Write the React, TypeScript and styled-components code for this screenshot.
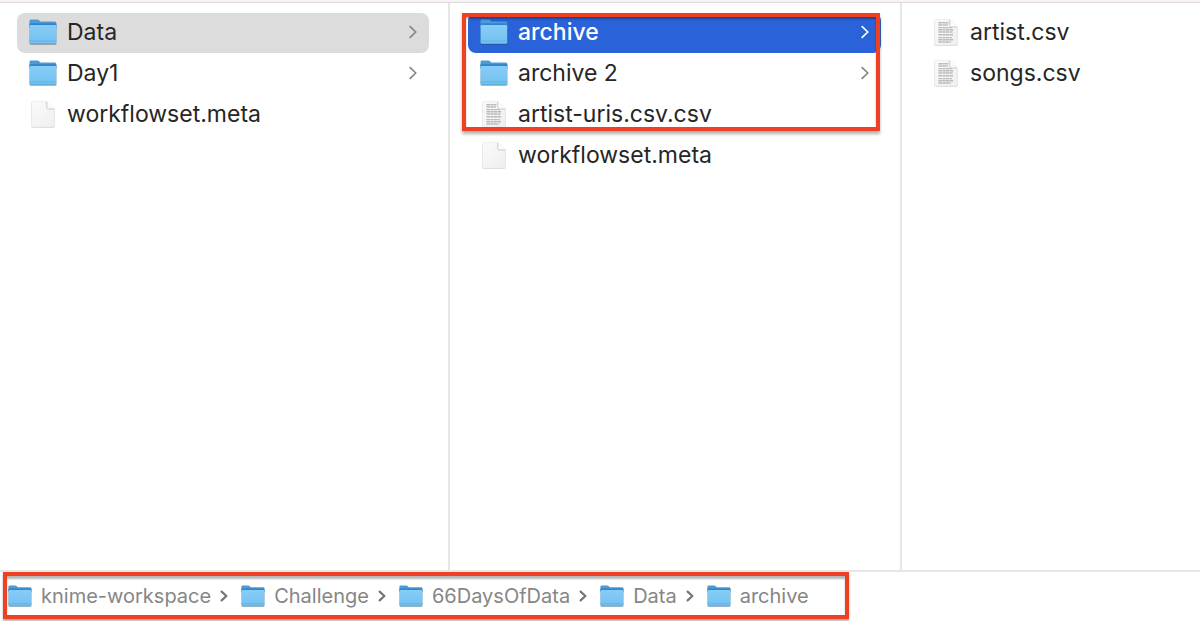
import React from "react";
import styled, { createGlobalStyle, css } from "styled-components";

const GlobalStyle = createGlobalStyle`
  *, *::before, *::after { box-sizing: border-box; }
  body {
    margin: 0;
    background: #ffffff;
    color: #262626;
    font-family: Inter, "Liberation Sans", sans-serif;
  }
`;

const Window = styled.main`
  display: flex;
  flex-direction: column;
  min-height: 100vh;
`;

const TopEdge = styled.div`
  height: 3px;
  background: #f8f2f4;
  border-bottom: 1px solid #dcd8da;
`;

const Browser = styled.div`
  flex: 1;
  display: grid;
  grid-template-columns: 450fr 452fr 298fr;
`;

const Column = styled.section`
  position: relative;
  padding: 10px 19px 10px 18px;
  border-right: 2px solid #e6e6e6;

  &:first-child {
    padding-left: 17px;
  }

  &:last-child {
    border-right: 0;
  }
`;

const List = styled.ul`
  display: flex;
  flex-direction: column;
  gap: 1px;
  margin: 0;
  padding: 0;
  list-style: none;
`;

type Tone = "plain" | "muted" | "active";

const Entry = styled.button<{ $tone: Tone }>`
  display: flex;
  align-items: center;
  gap: 10px;
  width: 100%;
  height: 40px;
  padding: 0 12px 2px;
  border: 0;
  border-radius: 8px;
  background: transparent;
  color: inherit;
  font-family: inherit;
  font-size: 23px;
  line-height: 28px;
  text-align: left;

  ${({ $tone }) => $tone === "muted" && css`background: #dcdcdc;`}
  ${({ $tone }) => $tone === "active" && css`
    background: #2962d9;
    color: #ffffff;
    font-weight: 500;
  `}
`;

const EntryName = styled.span`
  flex: 1;
  white-space: nowrap;
`;

const ListChevron = styled.svg<{ $tone: Tone }>`
  width: 8px;
  height: 14px;
  color: ${({ $tone }) => ($tone === "active" ? "#ffffff" : "#858585")};
`;

const Highlight = styled.div`
  position: absolute;
  top: 10px;
  left: 12px;
  right: 20px;
  height: 118px;
  border: 4px solid #ee4023;
  box-shadow: 0 3px 3px rgba(0, 0, 0, 0.3), inset 0 2px 2px rgba(0, 0, 0, 0.3);
  pointer-events: none;
`;

const Footer = styled.footer`
  display: flex;
  padding: 0 3px 2px;
  border-top: 2px solid #e6e6e6;
`;

const PathBar = styled.nav`
  padding: 0 36px 0 1px;
  border: 4px solid #ee4023;
  box-shadow: 0 2px 2px rgba(0, 0, 0, 0.35), inset 0 3px 2px rgba(0, 0, 0, 0.28);
`;

const PathList = styled.ol`
  display: flex;
  align-items: center;
  height: 39px;
  margin: 0;
  padding: 0;
  list-style: none;
`;

const PathItem = styled.li`
  display: flex;
  align-items: center;
`;

const PathLink = styled.a`
  display: flex;
  align-items: center;
  gap: 9px;
  color: #868686;
  font-size: 20px;
  line-height: 24px;
  text-decoration: none;
  white-space: nowrap;
`;

const PathChevron = styled.svg`
  width: 8px;
  height: 12px;
  margin: 0 13px 0 9px;
  color: #757575;
`;

const IconBox = styled.svg<{ $width: number; $height: number }>`
  flex: none;
  width: ${({ $width }) => $width}px;
  height: ${({ $height }) => $height}px;
  overflow: visible;
`;

function Folder({ small = false }: { small?: boolean }) {
  return (
    <IconBox $width={small ? 24 : 28} $height={small ? 22 : 26} viewBox="0 0 28 26" preserveAspectRatio="none" aria-hidden="true">
      <rect x="0.4" y="5" width="27.2" height="21" rx="1.6" fill="#000000" opacity="0.25" />
      <path d="M.5 2Q.5.6 1.9.6H8.4Q9.5.6 10.3 1.5L11.4 2.6H25.8Q27.3 2.6 27.3 4.2V9H.5Z" fill="#4b9bd6" />
      <path d="M.5 4.2H27.3V8H.5Z" fill="#3383ca" />
      <path d="M.5 7.4Q.5 6 2 6H25.8Q27.3 6 27.3 7.4V23.4Q27.3 25 25.7 25H2.1Q.5 25 .5 23.4Z" fill="url(#folder-front)" />
      <path d="M.5 22H27.3" stroke="#62b1e3" strokeWidth="0.9" />
      <path d="M1.2 24.7H26.6" stroke="#579fce" strokeWidth="0.8" />
    </IconBox>
  );
}

const textLines = [
  "M4.4 3.8H14.4", "M4.4 6H13.8", "M4.4 8.6H18", "M4.4 10.8H19.2", "M4.4 13H18.6",
  "M4.4 15.8H19", "M4.4 18.6H17.8", "M4.4 20.8H19", "M4.4 23H16.8",
];

const DocumentSlot = styled.span`
  display: flex;
  flex: none;
  justify-content: center;
  width: 28px;
`;

function Document({ text = false }: { text?: boolean }) {
  return (
    <DocumentSlot>
      <IconBox $width={24} $height={27} viewBox="0 0 24 27" aria-hidden="true">
        <path d="M2 1.2H16L23.6 8V25.2Q23.6 27 21.8 27H2.2Q.4 27 .4 25.2V2.8Q.4 1.2 2 1.2Z" fill="#000000" opacity="0.16" />
        <path d="M2 .4H15.8L23.4 8V24.6Q23.4 26.2 21.8 26.2H2.2Q.6 26.2.6 24.6V2Q.6.4 2 .4Z" fill="url(#paper)" stroke="#e4e4e4" strokeWidth="0.6" />
        {text && textLines.map((d) => (
          <path key={d} d={d} stroke="#bababa" strokeWidth="1.4" strokeDasharray="4 .4 2.6 .3 3.4 .4" />
        ))}
        <path d="M15.8.4 23.4 8H17.4Q15.8 8 15.8 6.4Z" fill="#fbfbfb" />
        <path d="M15.8.6V6.4Q15.8 8 17.4 8H23" fill="none" stroke="#c4c4c4" strokeWidth="0.9" />
      </IconBox>
    </DocumentSlot>
  );
}

function IconGradients() {
  return (
    <svg width="0" height="0" aria-hidden="true" display="block">
      <defs>
        <linearGradient id="folder-front" x1="0" y1="0" x2="0" y2="1">
          <stop offset="0" stopColor="#86cdf7" />
          <stop offset="1" stopColor="#72c0f0" />
        </linearGradient>
        <linearGradient id="paper" x1="0" y1="0" x2="1" y2="1">
          <stop offset="0" stopColor="#fafafa" />
          <stop offset="1" stopColor="#efefef" />
        </linearGradient>
      </defs>
    </svg>
  );
}

type Item = { name: string; kind: "folder" | "file" | "text"; tone?: Tone };

const columns: { label: string; items: Item[]; highlighted?: boolean }[] = [
  {
    label: "66DaysOfData",
    items: [
      { name: "Data", kind: "folder", tone: "muted" },
      { name: "Day1", kind: "folder" },
      { name: "workflowset.meta", kind: "file" },
    ],
  },
  {
    label: "Data",
    highlighted: true,
    items: [
      { name: "archive", kind: "folder", tone: "active" },
      { name: "archive 2", kind: "folder" },
      { name: "artist-uris.csv.csv", kind: "text" },
      { name: "workflowset.meta", kind: "file" },
    ],
  },
  {
    label: "archive",
    items: [
      { name: "artist.csv", kind: "text" },
      { name: "songs.csv", kind: "text" },
    ],
  },
];

const path = ["knime-workspace", "Challenge", "66DaysOfData", "Data", "archive"];

function FileEntry({ name, kind, tone = "plain" }: Item) {
  return (
    <li>
      <Entry type="button" $tone={tone}>
        {kind === "folder" ? <Folder /> : <Document text={kind === "text"} />}
        <EntryName>{name}</EntryName>
        {kind === "folder" && (
          <ListChevron $tone={tone} viewBox="0 0 8 14" fill="none" aria-hidden="true">
            <path d="M1.2 1.6 6.8 7 1.2 12.4" stroke="currentColor" strokeWidth="1.7" strokeLinecap="round" strokeLinejoin="round" />
          </ListChevron>
        )}
      </Entry>
    </li>
  );
}

export default function App() {
  return (
    <Window>
      <GlobalStyle />
      <TopEdge />
      <Browser>
        {columns.map((column) => (
          <Column key={column.label} aria-label={column.label}>
            <List>
              {column.items.map((item) => <FileEntry key={item.name} {...item} />)}
            </List>
            {column.highlighted && <Highlight />}
          </Column>
        ))}
      </Browser>
      <Footer>
        <PathBar aria-label="Path">
          <PathList>
            {path.map((name, index) => (
              <PathItem key={name}>
                <PathLink href={`#${name}`}>
                  <Folder small />
                  {name}
                </PathLink>
                {index < path.length - 1 && (
                  <PathChevron viewBox="0 0 8 12" fill="none" aria-hidden="true">
                    <path d="M1.6 1.6 6.4 6 1.6 10.4" stroke="currentColor" strokeWidth="2.2" strokeLinecap="round" strokeLinejoin="round" />
                  </PathChevron>
                )}
              </PathItem>
            ))}
          </PathList>
        </PathBar>
      </Footer>
      <IconGradients />
    </Window>
  );
}
